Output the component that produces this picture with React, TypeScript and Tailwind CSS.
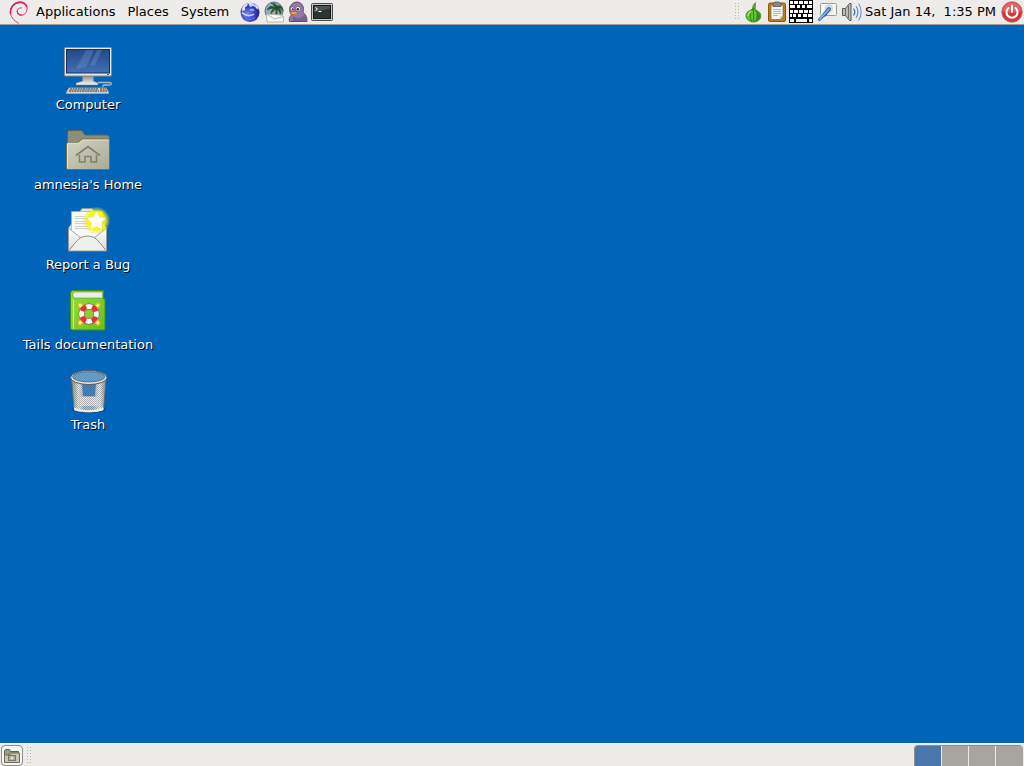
import type { ReactNode } from 'react'

/* ---------- Panel icons ---------- */

function DebianSwirl() {
	return (
		<svg viewBox="0 0 22 24" className="h-6 w-[22px]" fill="none" stroke="#dc2468" strokeLinecap="round">
			<path d="M10.5 23.2C5.5 20.5 2 16 2.3 11.3 2.7 5.5 7.5 1.8 12 1.9c4.5.1 7.3 3.2 7.1 6.8-.2 4-2.6 6.3-5.4 6.5-2.8.1-4.6-1.8-4.5-4 .1-2 1.7-3.5 4.3-3.4" strokeWidth=".9" />
			<path d="M2.5 13.5C2 8 5.5 3 11.5 2.3c3.500-.2 6 1.200 7.200 4.200" strokeWidth="1.7" />
			<path d="M13.6 15c-2.6.3-4.4-1.6-4.3-3.6" strokeWidth="1.2" />
		</svg>
	)
}

function GlobeIcon() {
	return (
		<svg viewBox="0 0 24 24" className="size-6">
			<defs>
				<radialGradient id="globe" cx=".35" cy=".6" r=".65">
					<stop offset="0" stopColor="#7f8ff0" />
					<stop offset=".5" stopColor="#3f4cc8" />
					<stop offset="1" stopColor="#20208c" />
				</radialGradient>
			</defs>
			<circle cx="12" cy="12.5" r="9.5" fill="url(#globe)" />
			<path d="M4 9c1-3 3-5 6-5.500L9 6 7 7v3l-3 1z" fill="#e8ecff" />
			<path d="M10 3l3-.5 4 2 1 3-3-1.500-3 1z" fill="#cdd5ff" />
			<path d="M16 3.500l4 3 1 3-3-1z" fill="#eef0ff" stroke="#6571d6" strokeWidth=".5" />
			<path d="M4 12.500c3 3.500 9 4 12 1.500" fill="none" stroke="#d3daff" strokeWidth="1.4" />
			<path d="M7 19c3 1.500 7 1 10-1.500" fill="none" stroke="#7582e4" />
			<path d="M11 9l4-.5 2 2-4 1z" fill="#8f9df2" />
		</svg>
	)
}

function PalmMailIcon() {
	return (
		<svg viewBox="0 0 24 24" className="size-6">
			<circle cx="12" cy="11" r="9" fill="#8eabc6" stroke="#56738f" />
			<path d="M4 14h16l-2 4H6z" fill="#b9c4bd" />
			<path d="M13 7c2 3 2 6 1 9" stroke="#4d4026" strokeWidth="1.8" fill="none" />
			<path d="M13 8c-3-3-6-2-8 2 3-1.500 5-2 8-1-3 0-4 2-4 5 1-2 3-4 5-5 3 1 4 3 4 6 2-3 1-5-1-7 2 0 3 1 4 3 0-4-3-6-6-5-1-2-3-3-6-3 2 1 3 2 4 5z" fill="#244d24" stroke="#2f5a2c" strokeWidth=".6" />
			<path d="M4.500 14l14 1 3 1.500V22H5z" fill="#f7f7f3" stroke="#a9aaa3" strokeWidth=".8" />
			<path d="M4.500 14l8 5 9-2.500" fill="none" stroke="#b7b7b0" />
		</svg>
	)
}

function PidginIcon() {
	return (
		<svg viewBox="0 0 24 24" className="size-6">
			<path d="M3.5 21.5c-1-3 .5-5 2-6.500C3 12 3 7 5.500 4.500 8 1.500 13 1 16 4.500c2 2.500 1.500 5 1 8 3 2 4 5 4 9z" fill="#9577a8" stroke="#5a3d6e" strokeWidth=".9" />
			<path d="M7 16c3 3 8 3 11-1 2 1.500 2.500 4 2.500 6H7z" fill="#7d5f90" />
			<circle cx="6.5" cy="9" r="2" fill="#fff" stroke="#4b2f5e" strokeWidth=".5" />
			<circle cx="12" cy="9" r="2.4" fill="#fff" stroke="#4b2f5e" strokeWidth=".5" />
			<circle cx="6.8" cy="9.2" r="1" fill="#222" />
			<circle cx="11.8" cy="9.2" r="1.2" fill="#222" />
			<path d="M4 13c2-2 5-2 8-.5-2 2-5 3.500-8 .5z" fill="#f0a24c" stroke="#a85f20" strokeWidth=".6" />
		</svg>
	)
}

function TerminalIcon() {
	return (
		<svg viewBox="0 0 24 24" className="size-6">
			<rect x="1.5" y="3.5" width="21" height="17" rx="1" fill="#c9c9c3" stroke="#4a4c48" />
			<rect x="3.5" y="5.5" width="17" height="13" fill="#2c3434" stroke="#151a1a" />
			<path d="M4 12l16-3.500V6H4z" fill="#4b5555" />
			<path d="M5.500 7.500l2 1.500-2 1.500M8.500 11.500h3" fill="none" stroke="#fff" />
		</svg>
	)
}

function OnionIcon() {
	return (
		<svg viewBox="0 0 24 24" className="size-6">
			<path d="M11.500 9c0-3 1-5 3-6.500 0 2 .3 4-.5 6.500z" fill="#58b32c" stroke="#3d7f1d" strokeWidth=".6" />
			<path d="M12.500 7.500c-1 3-7.500 3-7.500 8 0 4 3.500 6.500 7.500 6.500s7.500-2.500 7.300-6.500c-.3-5-6.300-5-7.300-8z" fill="#62c52b" stroke="#33811a" strokeWidth=".8" />
			<path d="M13 8.500c2.500 3 4.500 9 .5 13 3.200 0 5.800-2.500 5.600-6-.5-4-4.800-4.500-6.100-7z" fill="#348b1c" />
			<path d="M12 9c-3 3-4 8.500-1 12.500M12.800 8c-.5 5-.5 9 0 13.500" fill="none" stroke="#2f7a18" strokeWidth=".9" />
			<path d="M10.500 11c-2 1.500-3.500 2.500-3.700 5" fill="none" stroke="#a8ea7c" strokeWidth="1.3" />
		</svg>
	)
}

function ClipboardIcon() {
	return (
		<svg viewBox="0 0 24 24" className="size-6">
			<rect x="3.5" y="3" width="17" height="18.5" rx="1.5" fill="#c17d11" stroke="#8f5902" />
			<path d="M6 5h12v11l-3 3.500H6z" fill="#f4f4f2" stroke="#6b6b66" strokeWidth=".7" />
			<path d="M18 16h-3v3.500z" fill="#cfcfca" />
			<path d="M8 9.500h8M8 11.500h8M8 13.500h8M8 15.500h5" stroke="#b0b0b0" strokeWidth=".9" />
			<path d="M8 6.500v-3l2-1.500h4l2 1.500v3z" fill="#888a85" stroke="#555753" strokeWidth=".8" />
		</svg>
	)
}

function KeyboardIcon() {
	return (
		<svg viewBox="0 0 24 24" className="size-6" shapeRendering="crispEdges">
			<path d="M0 0h24v23H0z" fill="#fff" />
			<path d="M0 0h24v1H0zM0 4h24v1H0zM0 8h24v2H0zM0 13h24v1H0zM0 17h24v2H0zM0 22h24v1H0z" />
			<path d="M0 0h1v23H0zM23 0h1v23h-1zM4 0h1v5H4zM9 0h1v5H9zM14 0h1v5h-1zM19 0h1v5h-1zM6 4h2v6H6zM11 4h2v6h-2zM16 4h2v6h-2zM4 9h1v5H4zM9 9h1v5H9zM14 9h1v5h-1zM19 9h1v5h-1zM3 13h1v6H3zM7 13h2v6H7zM12 13h2v6h-2zM18 13h1v6h-1zM5 18h2v5H5zM18 18h2v5h-2z" />
		</svg>
	)
}

function PlugIcon() {
	return (
		<svg viewBox="0 0 24 24" className="size-6">
			<rect x="5.500" y="3.500" width="16" height="12" rx="1" fill="#f5f5f3" stroke="#9a9c97" />
			<circle cx="14" cy="8.5" r="3.5" fill="#e6e6e4" stroke="#bbb" strokeWidth=".7" />
			<path d="M4.500 19.500l6-6" stroke="#3465a4" strokeWidth="3" strokeLinecap="round" />
			<path d="M9.500 14.500l4.500-5.500" stroke="#3465a4" strokeWidth="4" strokeLinecap="round" />
			<path d="M4.500 19.500L14 9" stroke="#8fb5e2" strokeWidth="1.6" strokeLinecap="round" />
		</svg>
	)
}

function SpeakerIcon() {
	return (
		<svg viewBox="0 0 24 24" className="size-6" fill="none">
			<path d="M2.500 8.500h3l4-5H11v17H9.500l-4-5h-3z" fill="#babdb6" stroke="#555753" />
			<path d="M5.500 8.500v7M8.500 6v12" stroke="#666" strokeWidth=".9" />
			<path d="M13.500 8.500c1.500 2 1.500 5 0 7" stroke="#3465a4" strokeWidth="1.2" />
			<path d="M16 6c2.500 3.500 2.500 8.500 0 12" stroke="#5d8bc4" strokeWidth="1.2" />
			<path d="M18.500 3.500c3.500 5 3.500 12 0 17" stroke="#6f9bd0" strokeWidth="1.2" />
		</svg>
	)
}

function PowerIcon() {
	return (
		<svg viewBox="0 0 24 24" className="size-6" fill="none">
			<circle cx="12" cy="12" r="10.3" fill="#d4393c" stroke="#c06a6b" strokeWidth=".8" />
			<path d="M3 11a9 8.500 0 0118 0c-5 2-13 2-18 0z" fill="#de6567" />
			<path d="M8.500 8a5.500 5.500 0 107 0M12 5.500V12" stroke="#fff" strokeWidth="2" strokeLinecap="round" />
		</svg>
	)
}

function ShowDesktopIcon() {
	return (
		<svg viewBox="0 0 18 18" className="size-[18px]">
			<path d="M1.500 15.500v-12l1-1h4l1 2h8v11z" fill="#9c9d86" stroke="#5e6050" />
			<path d="M1.500 15.500V8h5l1-2h9v9.500z" fill="#c5c7b0" stroke="#6a6c5b" />
			<rect x="5.500" y="8.500" width="7" height="5" fill="#a9ab94" stroke="#75776a" />
			<circle cx="9" cy="11" r="1.5" fill="#e4e5d6" />
		</svg>
	)
}

/* ---------- Desktop icons ---------- */

function ComputerIcon() {
	return (
		<svg viewBox="0 0 48 48" className="size-12">
			<defs>
				<linearGradient id="screen" x1="0" y1="0" x2="0" y2="1">
					<stop offset="0" stopColor="#214889" />
					<stop offset="1" stopColor="#4371b5" />
				</linearGradient>
				<linearGradient id="stand" x1="0" y1="0" x2="0" y2="1">
					<stop offset="0" stopColor="#8c8c8a" />
					<stop offset="1" stopColor="#fbfbfa" />
				</linearGradient>
			</defs>
			<path d="M18.500 30h11v5l4.500 2v2H12v-2l6.500-2z" fill="url(#stand)" stroke="#777" strokeWidth=".6" />
			<rect x=".5" y="1.500" width="47" height="28.500" rx="1" fill="#e9e7e2" stroke="#8d8c88" />
			<rect x="2.500" y="3.500" width="43" height="23.500" fill="url(#screen)" stroke="#16305e" />
			<path d="M22 4h8l-8 17-10 2zM33 4h5l-7 15-5 1z" fill="#7f9fd0" opacity=".3" />
			<path d="M43 28.500h2" stroke="#666" />
			<path d="M34 36.500h11c3 0 3 2.500 0 2.500h-4c-2.500 0-2.500 1.500-2 3" fill="none" stroke="#a9b8c6" strokeWidth="1.3" />
			<path d="M5 41.500h37l3 4.500v2H2v-2z" fill="#cfcecb" stroke="#6b6b68" strokeWidth=".8" />
			<path d="M6 43h28M5 45h30M36 43h6M36 45h7" stroke="#666" strokeWidth="1.3" strokeDasharray="2 .6" />
		</svg>
	)
}

function HomeFolderIcon() {
	return (
		<svg viewBox="0 0 48 48" className="size-12">
			<defs>
				<linearGradient id="folder" x1="0" y1="0" x2="1" y2="1">
					<stop offset="0" stopColor="#d3d4c2" />
					<stop offset="1" stopColor="#a9ab94" />
				</linearGradient>
			</defs>
			<path d="M3.500 42V6l1.500-1.500h12.500L21 9h23l1.500 2v31z" fill="#8c8e78" stroke="#606250" />
			<path d="M2.500 42.500V18l1-1.500H14l4.500-3.500H45l.5 1.500v28l-1 1h-41z" fill="url(#folder)" stroke="#6d6f5c" />
			<path d="M3.500 42V18l.5-.8h10.500L19 14h25.500" fill="none" stroke="#e7e8d9" strokeWidth=".8" />
			<path d="M12 29.500l12-9 12 9" fill="none" stroke="#7e806d" strokeWidth="1.6" />
			<path d="M15.500 29v7H21v-5.500h6V36h5.500v-7" fill="none" stroke="#7e806d" strokeWidth="1.5" />
		</svg>
	)
}

function ReportIcon() {
	return (
		<svg viewBox="0 0 48 48" className="size-12">
			<defs>
				<radialGradient id="glow">
					<stop offset="0" stopColor="#fff600" />
					<stop offset=".65" stopColor="#f7f11a" stopOpacity=".9" />
					<stop offset="1" stopColor="#e8e800" stopOpacity="0" />
				</radialGradient>
				<linearGradient id="envelope" x1="0" y1="0" x2="0" y2="1">
					<stop offset="0" stopColor="#fff" />
					<stop offset="1" stopColor="#dcdcd8" />
				</linearGradient>
			</defs>
			<path d="M4.500 22L18 2.500h10L42.500 22v23h-38z" fill="#e4e4e1" stroke="#999a96" strokeWidth=".8" />
			<path d="M7.500 5.500h31V34h-31z" fill="#f8f8f6" stroke="#a9a9a5" strokeWidth=".7" />
			<path d="M11 10.500h10M11 12.500h14M11 15.500h12M11 17.500h14M11 20.500h12M11 22.500h18" stroke="#cbcbc7" strokeWidth=".9" />
			<path d="M4.500 22L17 32h13l12.500-10v22.500h-38z" fill="url(#envelope)" stroke="#92938f" strokeWidth=".8" />
			<path d="M5 44.500c4-5 7-9 11-12.500 4-2.500 11-2.500 15 0 4 3.500 7 7.500 11 12.500" fill="#efefec" stroke="#8b8c88" />
			<circle cx="32.5" cy="14.5" r="14" fill="url(#glow)" />
			<path d="M32.500 6.500l2.600 5.300 5.800.8-4.200 4.100 1 5.800-5.200-2.800-5.200 2.800 1-5.800-4.200-4.100 5.800-.8z" fill="#fff" stroke="#fff" strokeLinejoin="round" />
		</svg>
	)
}

function DocumentationIcon() {
	return (
		<svg viewBox="0 0 48 48" className="size-12">
			<defs>
				<linearGradient id="book" x1="0" y1="0" x2="1" y2="1">
					<stop offset="0" stopColor="#94e03c" />
					<stop offset="1" stopColor="#66c01b" />
				</linearGradient>
			</defs>
			<path d="M6.500 8c0-2.500 1-3.500 3-3.500h30V13h1.500v31H9c-1.500 0-2.500-1-2.500-2.500z" fill="url(#book)" stroke="#438d10" />
			<path d="M39 6H11c-3 0-3 6 0 6h28c-1-2-1-4 0-6z" fill="#f6f6f4" stroke="#5c9b2c" strokeWidth=".7" />
			<path d="M10 8h28M10 10h28" stroke="#dededb" strokeWidth=".8" />
			<path d="M9.500 14v29" stroke="#c4f58c" strokeWidth="1.2" />
			<path d="M16 19l18 18M34 19L16 37" stroke="#f0b52c" strokeWidth="5" strokeLinecap="round" />
			<path d="M16 19l18 18M34 19L16 37" stroke="#fff08a" strokeWidth="2.5" strokeLinecap="round" />
			<circle cx="25" cy="28" r="5" fill="#80d42c" />
			<circle cx="25" cy="28" r="7.500" fill="none" stroke="#9a4040" strokeWidth="6" />
			<circle cx="25" cy="28" r="7.500" fill="none" stroke="#f8f8f6" strokeWidth="5" />
			{/* four red bands on the diagonals */}
			<circle cx="25" cy="28" r="7.500" fill="none" stroke="#de3432" strokeWidth="5" strokeDasharray="5.89 5.89" transform="rotate(22.5 25 28)" />
		</svg>
	)
}

function TrashIcon() {
	return (
		<svg viewBox="0 0 48 48" className="size-12">
			<defs>
				<pattern id="mesh" width="2" height="2" patternUnits="userSpaceOnUse">
					<path d="M0 0h1v1H0zM1 1h1v1H1z" fill="#4e5254" />
				</pattern>
				<linearGradient id="can" x1="0" y1="0" x2="1" y2="0">
					<stop offset="0" stopColor="#8d9092" />
					<stop offset=".2" stopColor="#ececea" />
					<stop offset=".38" stopColor="#a9bed4" />
					<stop offset=".62" stopColor="#a9bed4" />
					<stop offset=".82" stopColor="#f0f0ee" />
					<stop offset="1" stopColor="#8d9092" />
				</linearGradient>
			</defs>
			<ellipse cx="25" cy="43.5" rx="17" ry="3.5" fill="#00316b" opacity=".5" />
			<path d="M7.500 12h34.500L39.500 43c-3 4-26 4-29.500 0z" fill="url(#can)" stroke="#666a6c" strokeWidth=".8" />
			<path d="M18 17h14l-1 13H19z" fill="#2f8ade" />
			<path d="M16 31h18v9H16z" fill="#f2f2f0" opacity=".8" />
			<path d="M8.500 16h32.500L38.500 41c-4 4-24 4-28 0z" fill="url(#mesh)" opacity=".38" />
			<path d="M10 41.500c5 3.500 24 3.500 29.500 0v2.500c-5 3-25 3-29.500 0z" fill="#ececea" />
			{/* rim with the inside showing through */}
			<ellipse cx="24.800" cy="11.500" rx="18.200" ry="7" fill="#e8e8e6" stroke="#55585a" />
			<ellipse cx="24.800" cy="10.800" rx="16.200" ry="5.200" fill="#5fa6e0" stroke="#555" strokeWidth=".7" />
			<ellipse cx="24.800" cy="10.800" rx="16.200" ry="5.200" fill="url(#mesh)" opacity=".25" />
		</svg>
	)
}

/* ---------- Layout ---------- */

const menus = ['Applications', 'Places', 'System']

const launchers = [
	{ label: 'Web browser', icon: <GlobeIcon /> },
	{ label: 'Mail', icon: <PalmMailIcon /> },
	{ label: 'Instant messenger', icon: <PidginIcon /> },
	{ label: 'Terminal', icon: <TerminalIcon /> },
]

const shortcuts = [
	{ label: 'Computer', icon: <ComputerIcon /> },
	{ label: "amnesia's Home", icon: <HomeFolderIcon /> },
	{ label: 'Report a Bug', icon: <ReportIcon /> },
	{ label: 'Tails documentation', icon: <DocumentationIcon /> },
	{ label: 'Trash', icon: <TrashIcon /> },
]

function PanelButton({ label, children }: { label: string; children: ReactNode }) {
	return (
		<button type="button" aria-label={label} className="flex shrink-0 items-center justify-center">
			{children}
		</button>
	)
}

function Handle() {
	return (
		<svg viewBox="0 0 6 18" className="h-[18px] w-1.5" fill="#b5b3b0" shapeRendering="crispEdges">
			{[0, 3, 6, 9, 12, 15].map((y) => (
				<g key={y}>
					<rect x="0" y={y} width="1" height="1" />
					<rect x="3" y={y} width="1" height="1" />
				</g>
			))}
		</svg>
	)
}

export default function App() {
	return (
		<div className="flex min-h-screen flex-col bg-[#0064b9] font-['DejaVu_Sans',sans-serif] text-[13px] leading-4 text-black">
			{/* Top panel */}
			<header className="flex h-[25px] items-center justify-between border-b border-[#a09f98] bg-[#edeceb]">
				<div className="flex items-center pl-2">
					<DebianSwirl />
					<nav className="flex gap-3 pr-[9px] pl-1.5">
						{menus.map((menu) => (
							<button key={menu} type="button">
								{menu}
							</button>
						))}
					</nav>
					{launchers.map(({ label, icon }) => (
						<PanelButton key={label} label={label}>
							{icon}
						</PanelButton>
					))}
				</div>

				{/* Notification area */}
				<div className="flex items-center">
					<Handle />
					<div className="flex items-center">
						<PanelButton label="Tor">
							<OnionIcon />
						</PanelButton>
						<PanelButton label="Clipboard">
							<ClipboardIcon />
						</PanelButton>
						<PanelButton label="Virtual keyboard">
							<KeyboardIcon />
						</PanelButton>
					</div>
					<div className="flex items-center gap-px pl-0.5">
						<PanelButton label="Network">
							<PlugIcon />
						</PanelButton>
						<PanelButton label="Volume">
							<SpeakerIcon />
						</PanelButton>
					</div>
					<button type="button" className="pr-1 pl-px whitespace-pre">
						{'Sat Jan 14,  1:35 PM'}
					</button>
					<PanelButton label="Shut down">
						<PowerIcon />
					</PanelButton>
				</div>
			</header>

			{/* Desktop */}
			<main className="flex-1 pt-[21px]">
				<ul className="flex w-44 flex-col gap-[13px]">
					{shortcuts.map(({ label, icon }) => (
						<li key={label}>
							<button
								type="button"
								className="flex w-full flex-col items-center gap-[3px] whitespace-nowrap text-white [text-shadow:1px_1px_0_#000]"
							>
								{icon}
								{label}
							</button>
						</li>
					))}
				</ul>
			</main>

			{/* Bottom panel */}
			<footer className="flex h-[23px] items-end justify-between border-t border-[#f8f8f7] bg-[#edeceb]">
				<div className="flex items-center gap-1 pl-px">
					<button
						type="button"
						aria-label="Show desktop"
						className="flex h-[21px] w-[22px] items-center justify-center rounded-sm border border-[#8f8d89] bg-[#f6f5f4]"
					>
						<ShowDesktopIcon />
					</button>
					<Handle />
				</div>
				<div className="mr-px flex h-[21px] gap-px overflow-hidden rounded-t-sm border-t border-l border-[#8f8d89] bg-[#edeceb]">
					<button type="button" aria-label="Workspace 1" className="w-[26px] bg-[#4b76ab]" />
					<button type="button" aria-label="Workspace 2" className="w-[26px] bg-[#a8a5a1]" />
					<button type="button" aria-label="Workspace 3" className="w-[26px] bg-[#a8a5a1]" />
					<button type="button" aria-label="Workspace 4" className="w-[27px] bg-[#a8a5a1]" />
				</div>
			</footer>
		</div>
	)
}
